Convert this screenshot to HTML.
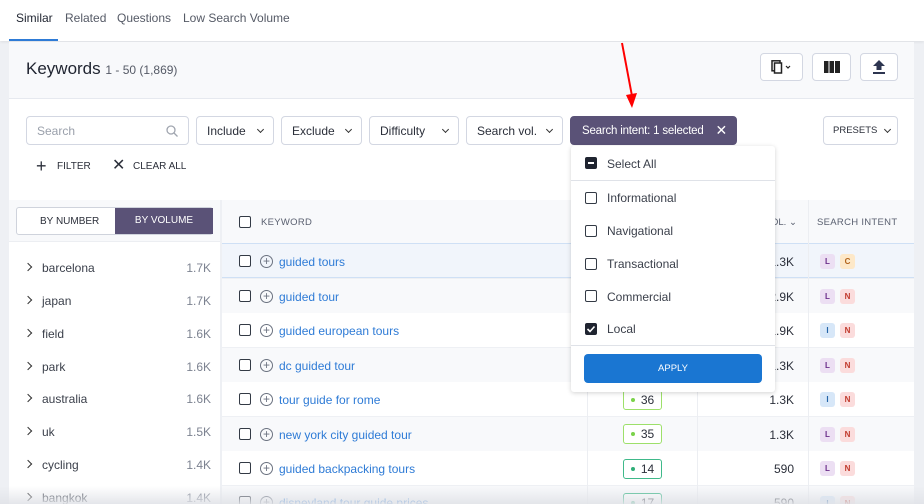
<!DOCTYPE html><html style="width:924px;height:504px;overflow:hidden"><head><style>
*{box-sizing:border-box;margin:0;padding:0}
body{width:924px;height:504px;overflow:hidden;background:#eef0f4;font-family:"Liberation Sans",sans-serif;position:relative;color:#2b2f3a}
.a{position:absolute}
.tab{position:absolute;top:11px;font-size:12px;color:#555a66}
.btn{position:absolute;top:116px;height:29px;border:1px solid #d3d7e2;border-radius:4px;background:#fff;font-size:12px;color:#2b2f3a;padding:0 10px;display:flex;align-items:center;justify-content:space-between;white-space:nowrap}
.chev{display:inline-block;flex:none;width:5px;height:5px;border-right:1.5px solid #333;border-bottom:1.5px solid #333;transform:rotate(45deg);margin-top:-3px;margin-left:8px}
.cb{position:absolute;width:12px;height:12px;border:1.6px solid #333a45;border-radius:2px;background:#fff}
.lrow{position:absolute;left:25px;width:186px;font-size:12px;color:#3a3f4a}
.lrow .v{position:absolute;right:0;color:#7c8290}
.lrow .g{position:absolute;left:0;top:3px;width:6px;height:6px;border-right:1.6px solid #333;border-top:1.6px solid #333;transform:rotate(45deg)}
.row{position:absolute;left:222px;width:692px;height:34px;overflow:hidden}
.kw{position:absolute;left:57px;font-size:12px;color:#2e7bd6}
.plus{position:absolute;left:38px;width:13px;height:13px;border:1.3px solid #6b7280;border-radius:50%;font-size:12px;line-height:10px;text-align:center;color:#6b7280}
.kd{position:absolute;left:401px;width:39px;height:20px;border:1.3px solid #9de06a;border-radius:3px;font-size:12px;text-align:center;line-height:18px;background:#fff}
.kd i{display:inline-block;width:4px;height:4px;border-radius:50%;background:#7ad24a;vertical-align:middle;margin-right:6px;margin-top:-2px}
.vol{position:absolute;right:120px;font-size:12px}
.tg{position:absolute;width:15px;height:15px;border-radius:3px;font-size:8px;font-weight:bold;text-align:center;line-height:15px}
.L{background:#ecdff3;color:#6b2d8a}.C{background:#fde8c8;color:#b2631a}.N{background:#fbdcdc;color:#c0392b}.I{background:#d7e7f8;color:#2464a8}
.dd{position:absolute;font-size:12px;color:#3a3f4a}
</style></head><body>
<div class="a" style="left:0;top:0;width:924px;height:41px;background:#fff;box-shadow:0 1px 3px rgba(0,0,0,.08)"></div>
<div class="tab" style="left:16px;color:#1f2430">Similar</div>
<div class="a" style="left:9px;top:39px;width:49px;height:2px;background:#2e7bd6"></div>
<div class="tab" style="left:65px">Related</div>
<div class="tab" style="left:117px">Questions</div>
<div class="tab" style="left:183px">Low Search Volume</div>

<div class="a" style="left:9px;top:42px;width:905px;height:57px;background:#f8f9fb;border-bottom:1px solid #e6e9ef"></div>
<div class="a" style="left:26px;top:59px;font-size:17px;color:#1f2430">Keywords <span style="font-size:12px;color:#555a66">1 - 50 (1,869)</span></div>
<div class="btn" style="left:760px;top:53px;width:43px;height:28px;justify-content:center;padding:0"><svg width="22" height="14" viewBox="0 0 22 14"><rect x="1" y="0.8" width="8" height="10" fill="none" stroke="#222" stroke-width="1.5"/><rect x="3.5" y="3" width="7" height="10" fill="#fff" stroke="#222" stroke-width="1.5"/><path d="M15 6l2 2 2-2" fill="none" stroke="#222" stroke-width="1.2"/></svg></div>
<div class="btn" style="left:812px;top:53px;width:39px;height:28px;justify-content:center;padding:0"><svg width="16" height="12"><rect x="0" y="0" width="4.5" height="12" fill="#222"/><rect x="5.5" y="0" width="4.5" height="12" fill="#222"/><rect x="11" y="0" width="5" height="12" fill="#222"/></svg></div>
<div class="btn" style="left:860px;top:53px;width:38px;height:28px;justify-content:center;padding:0"><svg width="14" height="14"><path d="M7 0L1 6h3.5v4h5V6H13z" fill="#2d3550"/><rect x="1" y="12" width="12" height="2" fill="#2d3550"/></svg></div>

<div class="a" style="left:9px;top:99px;width:905px;height:101px;background:#fff"></div>
<div class="btn" style="left:26px;width:163px;color:#9aa0ab"><span>Search</span><svg width="12" height="12"><circle cx="5" cy="5" r="4" fill="none" stroke="#a0a5af" stroke-width="1.3"/><path d="M8 8l3.5 3.5" stroke="#a0a5af" stroke-width="1.3"/></svg></div>
<div class="btn" style="left:196px;width:78px">Include<span class="chev"></span></div>
<div class="btn" style="left:281px;width:81px">Exclude<span class="chev"></span></div>
<div class="btn" style="left:369px;width:90px">Difficulty<span class="chev"></span></div>
<div class="btn" style="left:466px;width:97px">Search vol.<span class="chev"></span></div>
<div class="btn" style="left:570px;width:167px;background:#5a5277;border-color:#5a5277;color:#fff;padding:0 9px 0 11px;font-size:11.5px;letter-spacing:-.2px">Search intent: 1 selected<span style="font-size:14px;margin-left:4px">✕</span></div>
<div class="btn" style="left:823px;width:75px;font-size:9.5px;padding:0 9px">PRESETS<span class="chev"></span></div>
<div class="a" style="left:36px;top:157px;font-size:18px;line-height:18px">+</div>
<div class="a" style="left:57px;top:161px;font-size:10px">FILTER</div>
<div class="a" style="left:112px;top:157px;font-size:16px;line-height:18px">✕</div>
<div class="a" style="left:133px;top:161px;font-size:10px">CLEAR ALL</div>

<div class="a" style="left:9px;top:200px;width:211px;height:304px;background:#fff"></div>
<div class="a" style="left:9px;top:200px;width:211px;height:42px;background:#f8f9fb;border-bottom:1px solid #eceef2"></div>
<div class="a" style="left:16px;top:207px;width:197px;height:28px;border:1px solid #cfd3dc;border-radius:3px;background:#fff;font-size:10px"><span class="a" style="left:23px;top:8px">BY NUMBER</span><div class="a" style="left:98px;top:0;width:98px;height:26px;background:#5a5277;color:#fff;text-align:center;line-height:26px">BY VOLUME</div></div>
<div class="lrow" style="top:261px"><span class="g"></span><span style="margin-left:17px">barcelona</span><span class="v">1.7K</span></div>
<div class="lrow" style="top:294px"><span class="g"></span><span style="margin-left:17px">japan</span><span class="v">1.7K</span></div>
<div class="lrow" style="top:327px"><span class="g"></span><span style="margin-left:17px">field</span><span class="v">1.6K</span></div>
<div class="lrow" style="top:360px"><span class="g"></span><span style="margin-left:17px">park</span><span class="v">1.6K</span></div>
<div class="lrow" style="top:392px"><span class="g"></span><span style="margin-left:17px">australia</span><span class="v">1.6K</span></div>
<div class="lrow" style="top:425px"><span class="g"></span><span style="margin-left:17px">uk</span><span class="v">1.5K</span></div>
<div class="lrow" style="top:458px"><span class="g"></span><span style="margin-left:17px">cycling</span><span class="v">1.4K</span></div>
<div class="lrow" style="top:491px"><span class="g"></span><span style="margin-left:17px">bangkok</span><span class="v">1.4K</span></div>

<div class="a" style="left:222px;top:200px;width:692px;height:44px;background:#f8f9fb;border-bottom:1.5px solid #cfe0f5"></div>
<div class="cb" style="left:239px;top:216px"></div>
<div class="a" style="left:261px;top:217px;font-size:9.5px;color:#5a6070;letter-spacing:.3px">KEYWORD</div>
<div class="a" style="left:771px;top:217px;font-size:9.5px;color:#5a6070">OL. ⌄</div>
<div class="a" style="left:808px;top:200px;width:1px;height:44px;background:#eceef2"></div>
<div class="a" style="left:817px;top:217px;font-size:9.5px;color:#5a6070;letter-spacing:.3px">SEARCH INTENT</div>

<div class="row" style="top:244px;background:#f1f5fb;border-bottom:1.5px solid #cfe0f5"><div class="cb" style="left:17px;top:11px"></div><div class="plus" style="top:11px">+</div><div class="kw" style="top:11px">guided tours</div><div class="vol" style="top:11px">1.3K</div><div class="tg L" style="left:598px;top:10px">L</div><div class="tg C" style="left:618px;top:10px">C</div></div>
<div class="row" style="top:279px;background:#f8f9fb"><div class="cb" style="left:17px;top:11px"></div><div class="plus" style="top:11px">+</div><div class="kw" style="top:11px">guided tour</div><div class="vol" style="top:11px">2.9K</div><div class="tg L" style="left:598px;top:10px">L</div><div class="tg N" style="left:618px;top:10px">N</div></div>
<div class="row" style="top:313px;background:#fff"><div class="cb" style="left:17px;top:11px"></div><div class="plus" style="top:11px">+</div><div class="kw" style="top:11px">guided european tours</div><div class="vol" style="top:11px">1.9K</div><div class="tg I" style="left:598px;top:10px">I</div><div class="tg N" style="left:618px;top:10px">N</div></div>
<div class="row" style="top:348px;background:#f8f9fb"><div class="cb" style="left:17px;top:11px"></div><div class="plus" style="top:11px">+</div><div class="kw" style="top:11px">dc guided tour</div><div class="vol" style="top:11px">1.3K</div><div class="tg L" style="left:598px;top:10px">L</div><div class="tg N" style="left:618px;top:10px">N</div></div>
<div class="row" style="top:382px;background:#fff"><div class="cb" style="left:17px;top:11px"></div><div class="plus" style="top:11px">+</div><div class="kw" style="top:11px">tour guide for rome</div><div class="kd" style="top:8px"><i></i>36</div><div class="vol" style="top:11px">1.3K</div><div class="tg I" style="left:598px;top:10px">I</div><div class="tg N" style="left:618px;top:10px">N</div></div>
<div class="row" style="top:417px;background:#f8f9fb"><div class="cb" style="left:17px;top:11px"></div><div class="plus" style="top:11px">+</div><div class="kw" style="top:11px">new york city guided tour</div><div class="kd" style="top:7px"><i></i>35</div><div class="vol" style="top:11px">1.3K</div><div class="tg L" style="left:598px;top:10px">L</div><div class="tg N" style="left:618px;top:10px">N</div></div>
<div class="row" style="top:451px;background:#fff"><div class="cb" style="left:17px;top:11px"></div><div class="plus" style="top:11px">+</div><div class="kw" style="top:11px">guided backpacking tours</div><div class="kd" style="top:8px;border-color:#3fb98a"><i style="background:#2fae78"></i>14</div><div class="vol" style="top:11px">590</div><div class="tg L" style="left:598px;top:10px">L</div><div class="tg N" style="left:618px;top:10px">N</div></div>
<div class="row" style="top:486px;height:18px;background:#f8f9fb"><div class="cb" style="left:17px;top:10px"></div><div class="plus" style="top:10px">+</div><div class="kw" style="top:10px">disneyland tour guide prices</div><div class="kd" style="top:7px;border-color:#3fb98a"><i style="background:#2fae78"></i>17</div><div class="vol" style="top:10px">590</div><div class="tg I" style="left:598px;top:10px">I</div><div class="tg N" style="left:618px;top:10px">N</div></div>
<div class="a" style="left:587px;top:244px;width:1px;height:260px;background:#eceef2"></div>
<div class="a" style="left:697px;top:244px;width:1px;height:260px;background:#eceef2"></div>
<div class="a" style="left:808px;top:244px;width:1px;height:260px;background:#eceef2"></div>
<div class="a" style="left:0;top:486px;width:924px;height:18px;background:linear-gradient(rgba(230,232,236,0),rgba(225,227,232,.9))"></div>

<div class="a" style="left:571px;top:146px;width:204px;height:246px;background:#fff;border-radius:3px;box-shadow:0 1px 5px rgba(0,0,0,.18)"></div>
<div class="a" style="left:585px;top:157px;width:12px;height:12px;background:#1f2430;border-radius:2px"><div class="a" style="left:3px;top:5px;width:6px;height:2px;background:#fff"></div></div>
<div class="dd" style="left:607px;top:157px">Select All</div>
<div class="a" style="left:571px;top:180px;width:204px;height:1px;background:#dfe2e8"></div>
<div class="cb" style="left:585px;top:192px"></div><div class="dd" style="left:607px;top:191px">Informational</div>
<div class="cb" style="left:585px;top:225px"></div><div class="dd" style="left:607px;top:224px">Navigational</div>
<div class="cb" style="left:585px;top:258px"></div><div class="dd" style="left:607px;top:257px">Transactional</div>
<div class="cb" style="left:585px;top:290px"></div><div class="dd" style="left:607px;top:290px">Commercial</div>
<div class="a" style="left:585px;top:323px;width:12px;height:12px;background:#1f2430;border-radius:2px"><svg class="a" style="left:1px;top:1px" width="10" height="10"><path d="M1.5 5l2.5 2.5L8.5 2.5" fill="none" stroke="#fff" stroke-width="1.6"/></svg></div>
<div class="dd" style="left:607px;top:322px">Local</div>
<div class="a" style="left:571px;top:345px;width:204px;height:1px;background:#dfe2e8"></div>
<div class="a" style="left:584px;top:354px;width:178px;height:29px;background:#1a76d2;border-radius:4px;color:#fff;font-size:9.5px;text-align:center;line-height:29px">APPLY</div>

<svg class="a" style="left:615px;top:40px" width="30" height="72"><path d="M7 3L17 56" stroke="#f00" stroke-width="2"/><path d="M11 55l6 13 5-15z" fill="#f00"/></svg>
</body></html>
